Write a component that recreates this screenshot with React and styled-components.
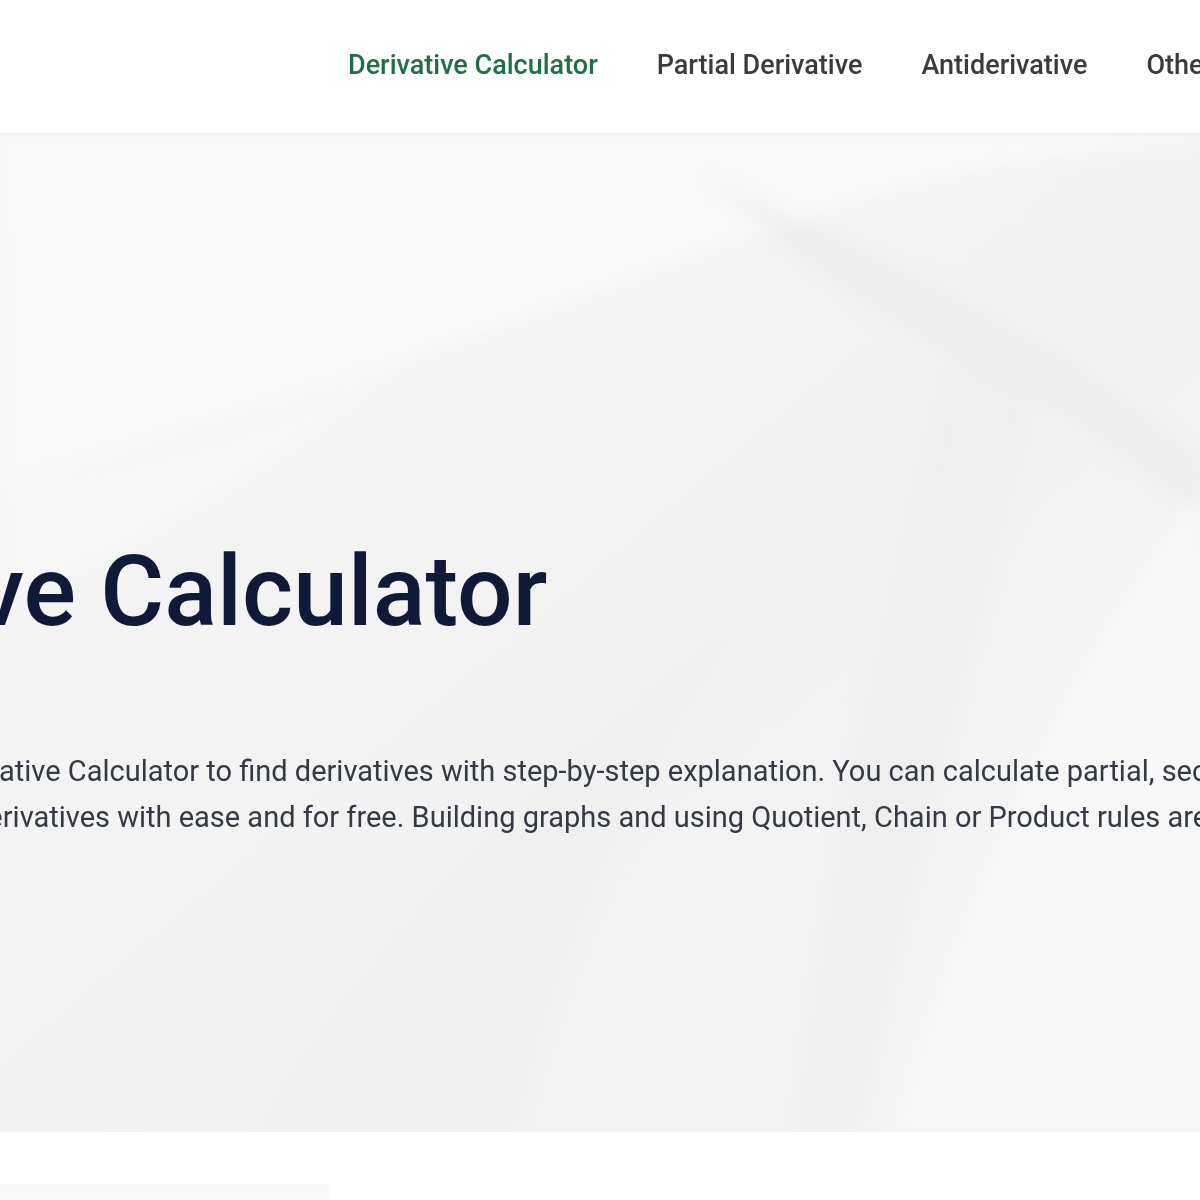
import styled, { createGlobalStyle } from "styled-components";

const GlobalStyle = createGlobalStyle`
  html, body {
    margin: 0;
    padding: 0;
    background: #fff;
    overflow: hidden;
  }
  body {
    font-family: Roboto, "Liberation Sans", Arial, sans-serif;
    -webkit-font-smoothing: antialiased;
  }
  * {
    box-sizing: border-box;
  }
`;

const navItems = [
  { label: "Derivative Calculator", active: true },
  { label: "Partial Derivative" },
  { label: "Antiderivative" },
  { label: "Other Calculators" },
];

const App = () => {
  return (
    <>
      <GlobalStyle />
      <Page>
        <Header>
          <Logo />
          <Nav>
            {navItems.map((item) => (
              <NavLink key={item.label} href="#" active={item.active}>
                {item.label}
              </NavLink>
            ))}
          </Nav>
        </Header>

        <Hero>
          <HeroBackdrop viewBox="0 0 1200 999" preserveAspectRatio="none">
            <defs>
              <filter id="soft" x="-20%" y="-20%" width="140%" height="140%">
                <feGaussianBlur stdDeviation="10" />
              </filter>
              <linearGradient id="base" x1="0" y1="0" x2="1" y2="1">
                <stop offset="0" stopColor="#f5f5f5" />
                <stop offset="0.55" stopColor="#f2f2f2" />
                <stop offset="1" stopColor="#f5f5f5" />
              </linearGradient>
            </defs>
            <rect width="1200" height="999" fill="url(#base)" />
            <g filter="url(#soft)">
              {/* light sweep across the top left */}
              <path
                d="M0 0 L1200 0 L1200 10 Q950 20 650 140 Q330 260 0 350 Z"
                fill="#f8f8f8"
              />
              {/* soft grey ribbon near the upper right */}
              <path
                d="M700 40 Q860 120 1000 190 Q1080 230 1200 330 L1200 380 Q1080 280 1010 250 Q880 190 700 40 Z"
                fill="#ebebeb"
                opacity="0.8"
              />
              <path
                d="M960 180 L1050 220 Q960 520 860 999 L790 999 Q860 560 960 180 Z"
                fill="#eeeeee"
                opacity="0.8"
              />
              {/* brighter wedge on the lower right */}
              <path
                d="M1200 360 Q1010 600 900 999 L1200 999 Z"
                fill="#f7f7f7"
              />
              {/* faint fold in the lower middle */}
              <path
                d="M250 999 Q420 720 760 470 Q580 720 520 999 Z"
                fill="#efefef"
                opacity="0.8"
              />
              <path
                d="M0 350 Q220 320 420 220 Q200 400 0 470 Z"
                fill="#f6f6f6"
              />
            </g>
          </HeroBackdrop>

          <HeroContent>
            <Title>Derivative Calculator</Title>
            <Lead>
              <Line>
                Use our Derivative Calculator to find derivatives with
                step-by-step explanation. You can calculate partial, second,
                third
              </Line>
              <Line>
                and higher derivatives with ease and for free. Building graphs
                and using Quotient, Chain or Product rules are available.
              </Line>
            </Lead>
          </HeroContent>
        </Hero>

        <Below>
          <Card />
        </Below>
      </Page>
    </>
  );
};

const Page = styled.div`
  width: 1200px;
  min-height: 1200px;
  background: #fff;
`;

const Header = styled.header`
  position: relative;
  z-index: 1;
  height: 133px;
  padding-bottom: 3px;
  display: flex;
  align-items: center;
  background: #fff;
  box-shadow: 0 1px 3px rgba(0, 0, 0, 0.05);
  white-space: nowrap;
`;

const Logo = styled.div`
  width: 348px;
  flex-shrink: 0;
`;

const Nav = styled.nav`
  display: flex;
  align-items: center;
  gap: 59px;
`;

const NavLink = styled.a`
  font-size: 27px;
  font-weight: 500;
  text-decoration: none;
  color: ${({ active }) => (active ? "#1f6f47" : "#3b3b3b")};
`;

const Hero = styled.section`
  position: relative;
  height: 999px;
  overflow: hidden;
  background: #f2f2f2;
`;

const HeroBackdrop = styled.svg`
  position: absolute;
  inset: 0;
  width: 100%;
  height: 100%;
`;

const HeroContent = styled.div`
  position: relative;
  padding-top: 400px;
  margin-left: -359px;
  white-space: nowrap;
`;

const Title = styled.h1`
  margin: 0;
  font-size: 98px;
  line-height: 1.2;
  font-weight: 500;
  color: #0e1a38;
`;

const Lead = styled.p`
  margin: 97px 0 0 187px;
  font-size: 29px;
  line-height: 46px;
  color: #343a44;
`;

const Line = styled.span`
  display: block;
`;

const Below = styled.section`
  padding-top: 52px;
  background: #fff;
`;

const Card = styled.div`
  width: 330px;
  height: 60px;
  background: linear-gradient(#f7f7f7, #fbfbfb 40%, #fdfdfd);
`;

export default App;
